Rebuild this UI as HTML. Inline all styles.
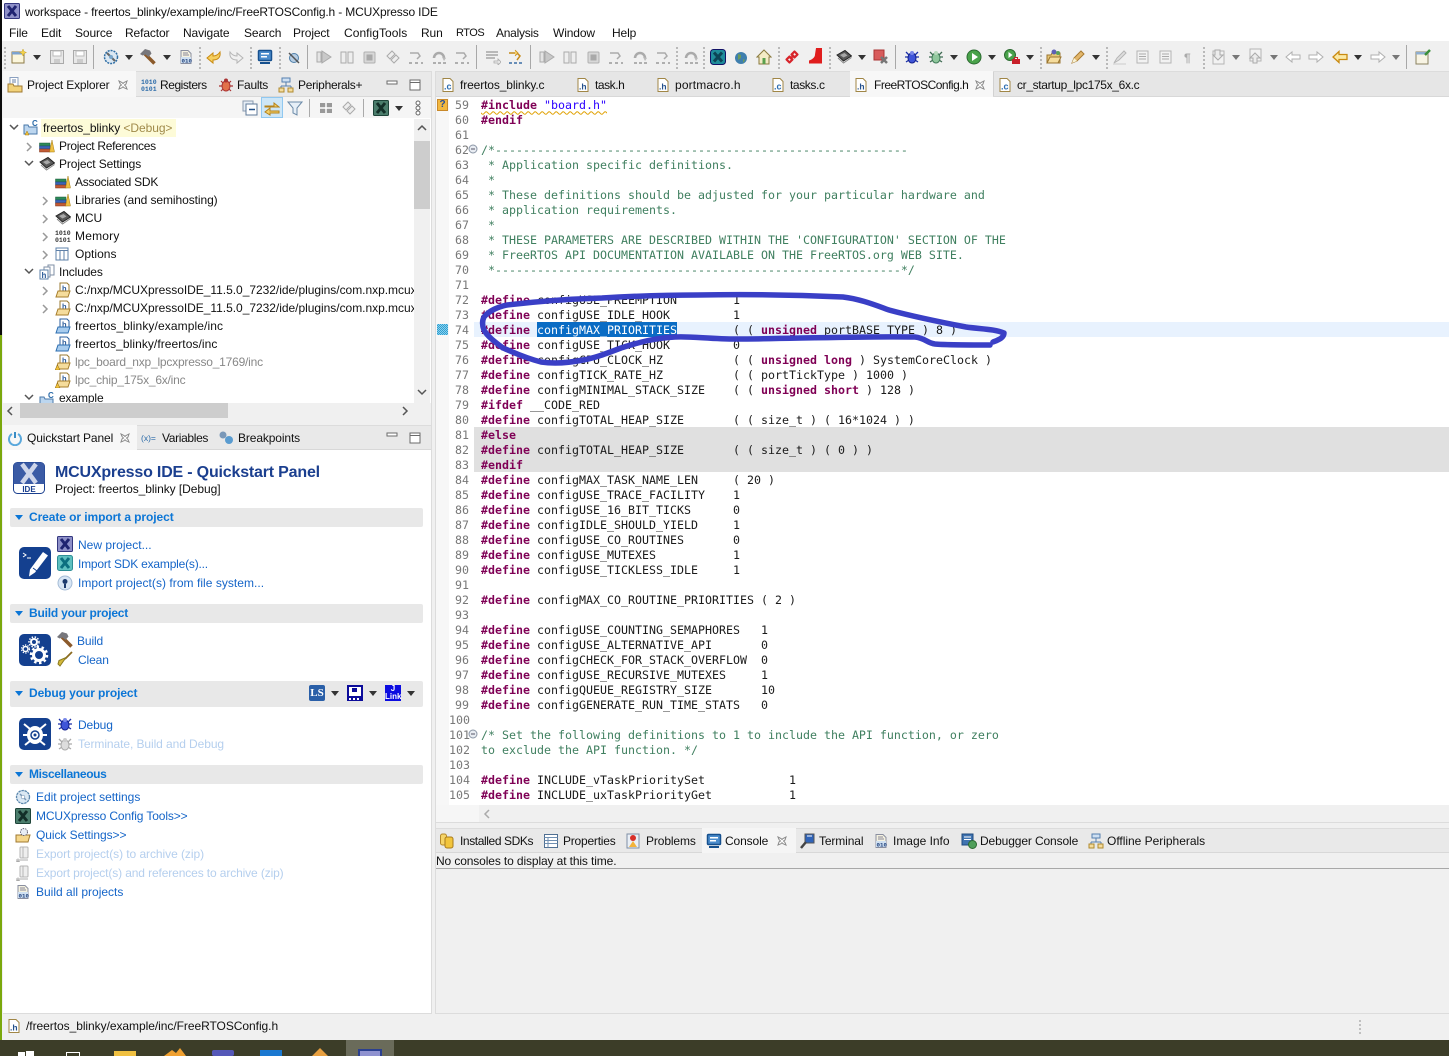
<!DOCTYPE html>
<html lang="en"><head><meta charset="utf-8"><title>workspace - freertos_blinky/example/inc/FreeRTOSConfig.h - MCUXpresso IDE</title>
<style>
html,body{margin:0;padding:0;background:#f0f0f0}
#r{position:relative;width:1449px;height:1056px;overflow:hidden;background:#f0f0f0;font:12px/16px "Liberation Sans",sans-serif;color:#111}
#r div,#r span.t,#r svg.i,#r svg.b{position:absolute}
.t{position:absolute;white-space:nowrap;letter-spacing:-.12px}
.i{width:16px;height:16px}
.a{width:0;height:0;border-left:4.5px solid transparent;border-right:4.5px solid transparent;border-top:5px solid #333}
.ag{border-top-color:#777}
.s{width:1px;height:24px;top:45px;background:#a8a8a8}
.d{width:2px;height:22px;top:47px;background:repeating-linear-gradient(#b9b9b9 0 2px,transparent 2px 4px)}
.l{color:#1565c8}.g{color:#b5cfee}.h{color:#888}
.sec{left:10px;width:413px;background:#e8e8e8;border-radius:2px}
.st{color:#0c76d6;font-weight:bold;letter-spacing:-.2px}
.tri{width:0;height:0;left:15px;border-left:4.5px solid transparent;border-right:4.5px solid transparent;border-top:5px solid #0c76d6}
pre{position:absolute;margin:0;font:11.63px/15px "DejaVu Sans Mono","Liberation Mono",monospace;white-space:pre}
pre b{color:#7f0055}
.c{color:#3f7f5f}
</style></head><body><div id="r">
<svg width="0" height="0" style="position:absolute"><defs>
<symbol id="h" viewBox="0 0 16 16"><path d="M3 1.500h7l3 3v10H3z" fill="#fff" stroke="#a08646"/><text x="4" y="12.500" font-family="Liberation Sans" font-size="8.500" font-weight="bold" fill="#24508c">.h</text></symbol>
<symbol id="cf" viewBox="0 0 16 16"><path d="M3 1.500h7l3 3v10H3z" fill="#fff" stroke="#a08646"/><text x="4" y="12.500" font-family="Liberation Sans" font-size="9" font-weight="bold" fill="#2a6cb0">.c</text></symbol>
<symbol id="nf" viewBox="0 0 16 16"><rect x="1" y="3" width="12" height="11" fill="#fbf6dc" stroke="#8d7a46"/><rect x="1" y="3" width="12" height="2.500" fill="#7da3cf"/><path d="M12 0l1 2.500 2.500 1-2.500 1-1 2.500-1-2.500-2.500-1 2.500-1z" fill="#f3d34a" stroke="#c9a227" stroke-width=".5"/></symbol>
<symbol id="sv" viewBox="0 0 16 16"><rect x="1.500" y="1.500" width="13" height="13" fill="#e8e8e8" stroke="#aaa"/><rect x="4" y="2" width="8" height="5" fill="#fff" stroke="#bbb"/><rect x="5" y="10" width="6" height="4" fill="#ccc"/></symbol>
<symbol id="gc" viewBox="0 0 16 16"><circle cx="8" cy="8" r="6.500" fill="#dbe8f3" stroke="#2f6ea5" stroke-width="1.500" stroke-dasharray="2 1"/><path d="M4 4l8 8" stroke="#666" stroke-width="2"/><circle cx="8" cy="8" r="2" fill="#7aa7cc"/></symbol>
<symbol id="ham" viewBox="0 0 16 16"><path d="M5 5l9.500 9.500" stroke="#8b5a2b" stroke-width="3.500"/><path d="M0 5l5-5 5 1.500 1.500 3-3 3.500-3-2.500-3 1z" fill="#77777c"/></symbol>
<symbol id="bin" viewBox="0 0 16 16"><path d="M3 1.500h7l3 3v10H3z" fill="#f4f1df" stroke="#8a8fa0"/><path d="M5 4h5M5 6h6" stroke="#889"/><rect x="3" y="8" width="10" height="6" fill="#cfe0f2"/><text x="3.500" y="13.500" font-family="Liberation Mono" font-size="5.800" font-weight="bold" fill="#1c3d78">010</text></symbol>
<symbol id="und" viewBox="0 0 16 16"><path d="M14 3c1 6-3 8-7 8v3L1 9l6-5v3c3 0 5-1 7-4z" fill="#f6cf5f" stroke="#c98a10"/></symbol>
<symbol id="red" viewBox="0 0 16 16"><path d="M2 3c-1 6 3 8 7 8v3l6-5-6-5v3c-3 0-5-1-7-4z" fill="#f0f0f0" stroke="#b5b5b5"/></symbol>
<symbol id="mon" viewBox="0 0 16 16"><rect x="1.500" y="1.500" width="13" height="10" rx="1" fill="#4b8ccc" stroke="#16508e" stroke-width="1.500"/><rect x="4" y="4" width="8" height="1.500" fill="#fff"/><rect x="4" y="7" width="6" height="1.500" fill="#fff"/><path d="M3 14h10" stroke="#16508e" stroke-width="2"/></symbol>
<symbol id="pin" viewBox="0 0 16 16"><circle cx="8" cy="8" r="4.500" fill="#b6cde3" stroke="#4d7ea8"/><path d="M3 3l10 10" stroke="#555" stroke-width="1.500"/></symbol>
<symbol id="res" viewBox="0 0 16 16"><rect x="1" y="3" width="4" height="10" fill="#e4e4e4" stroke="#aaa"/><path d="M6 2l9 6-9 6z" fill="#c8c8c8" stroke="#aaa"/></symbol>
<symbol id="pau" viewBox="0 0 16 16"><rect x="2" y="3" width="5" height="11" fill="#eee" stroke="#aaa"/><rect x="9" y="3" width="5" height="11" fill="#eee" stroke="#aaa"/></symbol>
<symbol id="sto" viewBox="0 0 16 16"><rect x="2" y="3" width="11" height="11" rx="1" fill="#d8d8d8" stroke="#b0b0b0"/><rect x="4.500" y="5.500" width="6" height="6" fill="#a9a9a9"/></symbol>
<symbol id="stp" viewBox="0 0 16 16"><path d="M2 4h8l2 3-3 3" fill="none" stroke="#aaa" stroke-width="1.500"/><path d="M1 14h3M7 14h3M13 14h2" stroke="#999" stroke-width="1.500"/></symbol>
<symbol id="sto2" viewBox="0 0 16 16"><path d="M3 9a5 5 0 0 1 10 0" fill="none" stroke="#aaa" stroke-width="2.500"/><path d="M11 8l4 1-2 3z" fill="#bbb"/><path d="M2 14h3M7 14h3M12 14h3" stroke="#999" stroke-width="1.500"/></symbol>
<symbol id="lin" viewBox="0 0 16 16"><path d="M1 3h12M1 6h12M1 9h9" stroke="#a5a5a5" stroke-width="1.500"/><path d="M9 12h4v-2l3 3-3 3v-2H9z" fill="#eee" stroke="#aaa" stroke-width=".8"/></symbol>
<symbol id="ost" viewBox="0 0 16 16"><path d="M1 4h8l3 3-3 4" fill="none" stroke="#c68a1a" stroke-width="1.500"/><path d="M7 1l3 3-3 3" fill="#f3d06a" stroke="#c68a1a" stroke-width=".8"/><path d="M1 14h3M6 14h3M11 14h3" stroke="#3a6ea5" stroke-width="1.500"/></symbol>
<symbol id="tx" viewBox="0 0 16 16"><rect x="0.500" y="0.500" width="15" height="15" rx="3" fill="#1f8c9a" stroke="#116"/><path d="M4 3.500l8 9M12 3.500l-8 9" stroke="#0c4456" stroke-width="3"/></symbol>
<symbol id="xg" viewBox="0 0 16 16"><rect x="0.500" y="0.500" width="15" height="15" rx="1" fill="#4b7d6c" stroke="#1e4439"/><path d="M4 3l8 10M12 3L4 13" stroke="#132f28" stroke-width="3"/></symbol>
<symbol id="xb" viewBox="0 0 16 16"><rect x="0.500" y="0.500" width="15" height="15" rx="1" fill="#8e90c8" stroke="#34377f"/><path d="M4 3l8 10M12 3L4 13" stroke="#1f2370" stroke-width="3"/></symbol>
<symbol id="xt" viewBox="0 0 16 16"><rect x="0.500" y="0.500" width="15" height="15" rx="2" fill="#5ec0c0" stroke="#2e8f96"/><path d="M4 3l8 10M12 3L4 13" stroke="#0b6f80" stroke-width="3"/></symbol>
<symbol id="glb" viewBox="0 0 16 16"><circle cx="8" cy="8" r="6" fill="#3f7fae"/><path d="M5 4l3 1v3l-3 2zM10 9l2 1-2 3z" fill="#6d9b5a"/></symbol>
<symbol id="hom" viewBox="0 0 16 16"><path d="M8 1L1 8h2v7h10V8h2z" fill="#f4ebc6" stroke="#8a7a3e"/><rect x="6.500" y="9" width="3" height="6" fill="#5aa04e"/></symbol>
<symbol id="lnk" viewBox="0 0 16 16"><path d="M2.500 10.500l3-3 3 3-3 3zM7.500 5.500l3-3 3 3-3 3z" fill="none" stroke="#d8242a" stroke-width="2.200" stroke-linejoin="round"/><path d="M6 10l4-4" stroke="#d8242a" stroke-width="2"/></symbol>
<symbol id="boot" viewBox="0 0 16 16"><path d="M8 0h6v15.500H1v-3c3-1 6-3 6-6z" fill="#e01d1d"/></symbol>
<symbol id="chip" viewBox="0 0 16 16"><path d="M1 6l8-4.500 6.500 5.500-8 5z" fill="#5a5a5a" stroke="#222"/><path d="M2 9l5.500 5 8-5.500" stroke="#888" fill="none"/><path d="M4 6l4.500-2 3 2.500-4 2z" fill="#a8a8a8"/></symbol>
<symbol id="rx" viewBox="0 0 16 16"><rect x="1" y="1" width="10" height="10" fill="#d85b5b" stroke="#a33"/><path d="M8 8l6 6M14 8l-6 6" stroke="#777" stroke-width="2.500"/></symbol>
<symbol id="bug" viewBox="0 0 16 16"><path d="M2 3l3 3M14 3l-3 3M1 8h3M15 8h-3M2 13l3-2M14 13l-3-2" stroke="#1a2fa8" stroke-width="1.300"/><ellipse cx="8" cy="9" rx="4" ry="5" fill="#3f55d8" stroke="#121f8a"/><circle cx="8" cy="4" r="2" fill="#7887e8"/></symbol>
<symbol id="bgg" viewBox="0 0 16 16"><path d="M2 3l3 3M14 3l-3 3M1 8h3M15 8h-3M2 13l3-2M14 13l-3-2" stroke="#3f6b53" stroke-width="1.300"/><ellipse cx="8" cy="9" rx="4" ry="5" fill="#8fc79c" stroke="#3f7a57"/><circle cx="8" cy="4" r="2" fill="#b7d8bb"/></symbol>
<symbol id="bgr" viewBox="0 0 16 16"><path d="M2 3l3 3M14 3l-3 3M1 8h3M15 8h-3M2 13l3-2M14 13l-3-2" stroke="#aaa" stroke-width="1.300"/><ellipse cx="8" cy="9" rx="4" ry="5" fill="#ddd" stroke="#aaa"/><circle cx="8" cy="4" r="2" fill="#ccc"/></symbol>
<symbol id="run" viewBox="0 0 16 16"><circle cx="8" cy="8" r="7" fill="#49a24a" stroke="#2b6a30"/><path d="M6 4l6 4-6 4z" fill="#fff"/></symbol>
<symbol id="rt" viewBox="0 0 16 16"><circle cx="6" cy="6" r="5.500" fill="#49a24a" stroke="#2b6a30"/><path d="M4.500 3l4 3-4 3z" fill="#fff"/><rect x="8" y="10" width="8" height="5" fill="#c8202a"/><rect x="10.500" y="8.500" width="3" height="2" fill="none" stroke="#c8202a"/></symbol>
<symbol id="fld" viewBox="0 0 16 16"><path d="M1 14V6h4l1-2h8v10z" fill="#e8c878" stroke="#9a7530"/><path d="M1 14l3-6h11l-3 6z" fill="#f5dc9c" stroke="#9a7530"/><circle cx="8" cy="3" r="2.500" fill="#5d5fb5"/><circle cx="12" cy="4" r="2" fill="#5aa05a"/></symbol>
<symbol id="pen" viewBox="0 0 16 16"><path d="M2 14l2-5 7-7 3 3-7 7z" fill="#e3b76c" stroke="#a87a30"/><path d="M2 14l2-5 3 3z" fill="#f8f3d6"/></symbol>
<symbol id="gp" viewBox="0 0 16 16"><path d="M2 14l3-5 7-7 2 2-7 7z" fill="#dedede" stroke="#b5b5b5"/><path d="M1 15h13" stroke="#ccc"/></symbol>
<symbol id="gd" viewBox="0 0 16 16"><rect x="2" y="2" width="11" height="12" fill="#f2f2f2" stroke="#b5b5b5"/><path d="M4 5h7M4 7.500h7M4 10h7" stroke="#aaa"/></symbol>
<symbol id="dn" viewBox="0 0 16 16"><rect x="3" y="2" width="11" height="13" fill="#f2f2f2" stroke="#b5b5b5"/><path d="M5 1h5v5h3l-5 5-5-5h2z" fill="#ececec" stroke="#aaa"/></symbol>
<symbol id="up" viewBox="0 0 16 16"><rect x="3" y="1" width="11" height="12" fill="#f2f2f2" stroke="#b5b5b5"/><path d="M6 15v-5H3l5-5 5 5h-3v5z" fill="#ececec" stroke="#aaa"/></symbol>
<symbol id="la" viewBox="0 0 16 16"><path d="M7 3v3h8v4H7v3L1 8z" fill="#fff" stroke="#b0b0b0"/></symbol>
<symbol id="ra" viewBox="0 0 16 16"><path d="M9 3v3H1v4h8v3l6-5z" fill="#fff" stroke="#b0b0b0"/></symbol>
<symbol id="lo" viewBox="0 0 16 16"><path d="M7 2.500v3h8v5H7v3L1 8z" fill="#fbe9a5" stroke="#c98a10" stroke-width="1.300"/></symbol>
<symbol id="win" viewBox="0 0 16 16"><rect x="1" y="3" width="12" height="12" fill="#f8f4e4" stroke="#8a8260"/><rect x="1" y="3" width="12" height="2.500" fill="#8faed0"/><path d="M10 6l5-5" stroke="#3a8f3a" stroke-width="2.500"/></symbol>
<symbol id="cl" viewBox="0 0 12 12"><path d="M2 2l3 1.500L6 4.500 7 3.500 10 2l-1 3-1.500 1L9 7.500 10 10 7 8.700 6 7.700 5 8.700 2 10l1-3 1.500-1L3 4.500z" fill="#fff" stroke="#8b8b8b"/></symbol>
<symbol id="pe" viewBox="0 0 16 16"><rect x="3" y="0.500" width="8" height="10" fill="#fff" stroke="#8aa0c0"/><path d="M5 3h4M5 5h4" stroke="#6a80a8"/><path d="M1 15V7h5l1 2h8v6z" fill="#f2d27a" stroke="#a07a30"/></symbol>
<symbol id="bits" viewBox="0 0 16 16"><text x="0" y="7" font-family="Liberation Mono" font-size="6.500" font-weight="bold" fill="#2a6aa8">1010</text><text x="0" y="14" font-family="Liberation Mono" font-size="6.500" font-weight="bold" fill="#2a6aa8">0101</text></symbol>
<symbol id="bits2" viewBox="0 0 16 16"><text x="0" y="7" font-family="Liberation Mono" font-size="6.500" font-weight="bold" fill="#333">1010</text><text x="0" y="14" font-family="Liberation Mono" font-size="6.500" font-weight="bold" fill="#333">0101</text></symbol>
<symbol id="flt" viewBox="0 0 16 16"><path d="M3 4l3 3M13 4l-3 3M1 9h3M15 9h-3M3 14l3-3M13 14l-3-3" stroke="#a33" stroke-width="1.200"/><ellipse cx="8" cy="9" rx="4" ry="5" fill="#e2714b" stroke="#a33"/><circle cx="8" cy="3.500" r="2" fill="#a33"/></symbol>
<symbol id="per" viewBox="0 0 16 16"><rect x="4" y="1" width="8" height="4" fill="#cfe0f2" stroke="#5580b0"/><path d="M8 5v4M3 9h10M3 9v2M13 9v2" stroke="#5580b0" fill="none"/><rect x="1" y="11" width="5" height="4" fill="#f5dc9c" stroke="#b08a30"/><rect x="10" y="11" width="5" height="4" fill="#f5dc9c" stroke="#b08a30"/></symbol>
<symbol id="min" viewBox="0 0 16 16"><rect x="3" y="4" width="10" height="3" fill="#fff" stroke="#6b6b6b"/></symbol>
<symbol id="max" viewBox="0 0 16 16"><rect x="3" y="3" width="10" height="10" fill="#fff" stroke="#6b6b6b"/><path d="M3 5.500h10" stroke="#6b6b6b"/></symbol>
<symbol id="col" viewBox="0 0 16 16"><rect x="1" y="1" width="10" height="10" fill="#e6edf5" stroke="#8a9ab0"/><rect x="4" y="4" width="11" height="11" fill="#fff" stroke="#5f7a9a"/><path d="M7 9.500h6" stroke="#22508a" stroke-width="1.500"/></symbol>
<symbol id="lk" viewBox="0 0 16 16"><path d="M1 6h9V3l5 4-5 0H1z" fill="#f3d06a" stroke="#b5821a"/><path d="M15 11H6V8L1 12l5 3v-2h9z" fill="#f3d06a" stroke="#b5821a"/></symbol>
<symbol id="fil" viewBox="0 0 16 16"><path d="M1 2h14l-5 6v7l-4-2V8z" fill="#e6eff7" stroke="#6b8aa8"/></symbol>
<symbol id="grp" viewBox="0 0 16 16"><rect x="2" y="3" width="12" height="10" fill="#999"/><path d="M8 3v10M2 8h12" stroke="#fff" stroke-width="1.500"/></symbol>
<symbol id="syn" viewBox="0 0 16 16"><path d="M2 7l5-5 3 3-5 5zM14 9l-5 5-3-3 5-5z" fill="#eee" stroke="#aaa"/></symbol>
<symbol id="prj" viewBox="0 0 16 16"><path d="M1 14V5h4l1 2h8v7z" fill="#bcd6ef" stroke="#4a78aa"/><text x="9" y="6" font-family="Liberation Sans" font-size="8" font-weight="bold" fill="#2a6aa8">C</text><path d="M2 15l2-4 2 4z" fill="#f3c33b" stroke="#a57b10" stroke-width=".5"/></symbol>
<symbol id="lib" viewBox="0 0 16 16"><rect x="0.500" y="5" width="10.500" height="3" fill="#2c8a58" stroke="#1c5a3a" stroke-width=".5"/><rect x="0.500" y="8" width="10.500" height="3" fill="#3a66b8" stroke="#1f3f80" stroke-width=".5"/><rect x="0.500" y="11" width="10.500" height="3" fill="#c25c36" stroke="#7c3018" stroke-width=".5"/><path d="M10.500 14l2.500-12 2.500 12z" fill="#efc044" stroke="#a57b10" stroke-width=".5"/></symbol>
<symbol id="opt" viewBox="0 0 16 16"><rect x="2" y="2" width="12" height="12" fill="#fff" stroke="#5e80a8"/><path d="M2 4.500h12M6 4.500V14M10 4.500V14" stroke="#5e80a8"/></symbol>
<symbol id="inc" viewBox="0 0 16 16"><rect x="9" y="1" width="6" height="10" fill="#fff" stroke="#7f8fa5"/><rect x="5" y="3" width="6" height="10" fill="#fff" stroke="#7f8fa5"/><rect x="1" y="6" width="8" height="9" fill="#fff" stroke="#5e80a8"/><text x="2.500" y="14" font-family="Liberation Sans" font-size="8" font-weight="bold" fill="#2a5a98">h</text></symbol>
<symbol id="fh" viewBox="0 0 16 16"><path d="M5 1h7l2 2v8H5z" fill="#fff" stroke="#9a7a30"/><text x="7" y="9" font-family="Liberation Sans" font-size="7.500" font-weight="bold" fill="#2a5a98">h</text><path d="M1 15l2-6h12l-2 6z" fill="#f5dc9c" stroke="#a77e2c"/></symbol>
<symbol id="fb" viewBox="0 0 16 16"><path d="M5 1h7l2 2v8H5z" fill="#fff" stroke="#2d5f9e"/><text x="7" y="9" font-family="Liberation Sans" font-size="7.500" font-weight="bold" fill="#2a5a98">h</text><path d="M1 15l2-6h12l-2 6z" fill="#a8ccee" stroke="#2d6eb0"/></symbol>
<symbol id="fw" viewBox="0 0 16 16"><path d="M5 1h7l2 2v8H5z" fill="#fff" stroke="#9a7a30"/><text x="7" y="9" font-family="Liberation Sans" font-size="7.500" font-weight="bold" fill="#2a5a98">h</text><path d="M1 15l2-6h12l-2 6z" fill="#f5dc9c" stroke="#a77e2c"/><path d="M0 16l2.500-5 2.500 5z" fill="#f3c33b" stroke="#8a6510" stroke-width=".5"/></symbol>
<symbol id="pw" viewBox="0 0 16 16"><path d="M8 2v6" stroke="#3a8cc4" stroke-width="2"/><path d="M5 4a6 6 0 1 0 6 0" fill="none" stroke="#5aa8dc" stroke-width="2"/></symbol>
<symbol id="vr" viewBox="0 0 16 16"><text x="0" y="11" font-family="Liberation Sans" font-size="8.500" fill="#2a6aa8">(x)=</text></symbol>
<symbol id="bp" viewBox="0 0 16 16"><circle cx="5" cy="5" r="3.500" fill="#7a98b8"/><circle cx="11" cy="10" r="4" fill="#5a9cd0"/></symbol>
<symbol id="sdk" viewBox="0 0 16 16"><rect x="0.500" y="1" width="6" height="11" rx="2" fill="#f5d468" stroke="#b5892a"/><rect x="5" y="4" width="8" height="11" rx="2" fill="#f2c53c" stroke="#a87a1c"/></symbol>
<symbol id="prp" viewBox="0 0 16 16"><rect x="1.500" y="1.500" width="13" height="13" fill="#fff" stroke="#4f6f92"/><path d="M1.500 4.500h13M5 4.500v10M1.500 7.500h13M1.500 10.500h13" stroke="#6f8fb2"/></symbol>
<symbol id="prb" viewBox="0 0 16 16"><rect x="2" y="1" width="12" height="14" fill="#e9eff6" stroke="#7f8fa5"/><circle cx="8" cy="5" r="3" fill="#d8302a"/><path d="M8 8l4 6H4z" fill="#f3b33b"/></symbol>
<symbol id="trm" viewBox="0 0 16 16"><rect x="6" y="1" width="9" height="9" fill="#2f63b8" stroke="#555"/><path d="M8 3h5" stroke="#fff"/><path d="M2 15l5-6" stroke="#444" stroke-width="2.500"/></symbol>
<symbol id="dbg" viewBox="0 0 16 16"><rect x="1" y="1" width="11" height="11" fill="#3f73b0" stroke="#1e4a80"/><path d="M3 4h7M3 6.500h7" stroke="#fff"/><circle cx="11.500" cy="11.500" r="4" fill="#4f9f5a" stroke="#2b6a30"/></symbol>
<symbol id="exp" viewBox="0 0 16 16"><rect x="5" y="1" width="8" height="11" rx="1" fill="#eee" stroke="#b5b5b5"/><path d="M8 1v11" stroke="#b5b5b5"/><path d="M1 16l2-4 2 4z" fill="#aaa"/><path d="M1 14h12" stroke="#c8c8c8" stroke-width="1.500"/></symbol>
<symbol id="wr" viewBox="0 0 16 16"><circle cx="8" cy="8" r="6.500" fill="#dbe8f3" stroke="#5a86ac" stroke-width="1.300" stroke-dasharray="2.500 .7"/><path d="M5 5l6 6" stroke="#7a98b5" stroke-width="1.500"/><circle cx="8" cy="8" r="1.800" fill="#fff" stroke="#7a98b5" stroke-width=".7"/></symbol>
<symbol id="qs" viewBox="0 0 16 16"><path d="M1 15V8h14l-2 7z" fill="#f5d78c" stroke="#a07a30"/><circle cx="9" cy="5" r="3.500" fill="#e8eef5" stroke="#667" stroke-dasharray="1.500 1"/></symbol>
<symbol id="imp" viewBox="0 0 16 16"><circle cx="8" cy="8" r="7" fill="#d8e6f5" stroke="#a5bcd6"/><circle cx="8" cy="6.500" r="2.500" fill="#1b3a6e"/><path d="M7 9h2v4H7z" fill="#1b3a6e"/></symbol>
<symbol id="cln" viewBox="0 0 16 16"><path d="M15 1L8 8" stroke="#8a6a20" stroke-width="1.800"/><path d="M9 6.500l-6 8.500-2-2 1-3.500z" fill="#d4b83a" stroke="#8a7a20"/></symbol>
<symbol id="dots" viewBox="0 0 16 16"><circle cx="8" cy="3" r="2" fill="#fff" stroke="#666"/><circle cx="8" cy="8" r="2" fill="#fff" stroke="#666"/><circle cx="8" cy="13" r="2" fill="#fff" stroke="#666"/></symbol>
</defs></svg>

<!-- window edges -->
<div style="left:0;top:0;width:1449px;height:41px;background:#fff"></div>
<div style="left:0;top:0;width:2px;height:335px;background:#0b0b0b"></div>
<div style="left:0;top:335px;width:2px;height:705px;background:#7aa80c"></div>

<!-- title -->
<svg class="i" style="left:4px;top:3px"><use href="#xb"/></svg>
<span class="t" style="left:25px;top:4px;letter-spacing:-.16px">workspace - freertos_blinky/example/inc/FreeRTOSConfig.h - MCUXpresso IDE</span>

<!-- menu -->
<span class="t" style="left:9px;top:25px">File</span><span class="t" style="left:41px;top:25px">Edit</span><span class="t" style="left:75px;top:25px">Source</span><span class="t" style="left:125px;top:25px">Refactor</span><span class="t" style="left:183px;top:25px">Navigate</span><span class="t" style="left:244px;top:25px">Search</span><span class="t" style="left:293px;top:25px">Project</span><span class="t" style="left:344px;top:25px;letter-spacing:.05px">ConfigTools</span><span class="t" style="left:421px;top:25px">Run</span><span class="t" style="left:456px;top:25px;font-size:11px;letter-spacing:-.5px">RTOS</span><span class="t" style="left:496px;top:25px;letter-spacing:-.25px">Analysis</span><span class="t" style="left:553px;top:25px">Window</span><span class="t" style="left:612px;top:25px">Help</span>

<!-- toolbar -->
<div class="d" style="left:4px"></div>
<svg class="i" style="left:11px;top:49px"><use href="#nf"/></svg><div class="a" style="left:33px;top:55px"></div>
<svg class="i" style="left:49px;top:49px"><use href="#sv"/></svg><svg class="i" style="left:72px;top:49px"><use href="#sv"/></svg>
<div class="s" style="left:93px"></div>
<svg class="i" style="left:103px;top:49px"><use href="#gc"/></svg><div class="a" style="left:125px;top:55px"></div>
<svg class="i" style="left:140px;top:49px"><use href="#ham"/></svg><div class="a" style="left:163px;top:55px"></div>
<svg class="i" style="left:178px;top:49px"><use href="#bin"/></svg>
<div class="d" style="left:199px"></div>
<svg class="i" style="left:206px;top:49px"><use href="#und"/></svg><svg class="i" style="left:228px;top:49px"><use href="#red"/></svg>
<div class="d" style="left:250px"></div>
<svg class="i" style="left:257px;top:49px"><use href="#mon"/></svg>
<div class="d" style="left:279px"></div>
<svg class="i" style="left:286px;top:50px"><use href="#pin"/></svg>
<div class="s" style="left:307px"></div>
<svg class="i" style="left:316px;top:49px"><use href="#res"/></svg><svg class="i" style="left:339px;top:49px"><use href="#pau"/></svg><svg class="i" style="left:362px;top:49px"><use href="#sto"/></svg><svg class="i" style="left:385px;top:49px"><use href="#syn"/></svg><svg class="i" style="left:408px;top:49px"><use href="#stp"/></svg><svg class="i" style="left:431px;top:49px"><use href="#sto2"/></svg><svg class="i" style="left:454px;top:49px"><use href="#stp"/></svg>
<div class="s" style="left:476px"></div>
<svg class="i" style="left:485px;top:49px"><use href="#lin"/></svg><svg class="i" style="left:508px;top:49px"><use href="#ost"/></svg>
<div class="s" style="left:530px"></div>
<svg class="i" style="left:539px;top:49px"><use href="#res"/></svg><svg class="i" style="left:562px;top:49px"><use href="#pau"/></svg><svg class="i" style="left:586px;top:49px"><use href="#sto"/></svg><svg class="i" style="left:608px;top:49px"><use href="#stp"/></svg><svg class="i" style="left:632px;top:49px"><use href="#sto2"/></svg><svg class="i" style="left:655px;top:49px"><use href="#stp"/></svg>
<div class="d" style="left:676px"></div>
<svg class="i" style="left:683px;top:49px"><use href="#sto2"/></svg>
<div class="d" style="left:703px"></div>
<svg class="i" style="left:710px;top:49px"><use href="#tx"/></svg><svg class="i" style="left:733px;top:50px"><use href="#glb"/></svg><svg class="i" style="left:756px;top:49px"><use href="#hom"/></svg>
<div class="d" style="left:778px"></div>
<svg class="i" style="left:784px;top:49px"><use href="#lnk"/></svg><svg class="i" style="left:808px;top:48px"><use href="#boot"/></svg>
<div class="d" style="left:829px"></div>
<svg class="i" style="left:836px;top:49px"><use href="#chip"/></svg><div class="a" style="left:858px;top:55px"></div>
<svg class="i" style="left:873px;top:49px"><use href="#rx"/></svg>
<div class="s" style="left:895px"></div>
<svg class="i" style="left:904px;top:49px"><use href="#bug"/></svg><svg class="i" style="left:928px;top:49px"><use href="#bgg"/></svg><div class="a" style="left:950px;top:55px"></div>
<svg class="i" style="left:966px;top:49px"><use href="#run"/></svg><div class="a" style="left:988px;top:55px"></div>
<svg class="i" style="left:1004px;top:49px"><use href="#rt"/></svg><div class="a" style="left:1026px;top:55px"></div>
<div class="d" style="left:1040px"></div>
<svg class="i" style="left:1046px;top:49px"><use href="#fld"/></svg><svg class="i" style="left:1070px;top:49px"><use href="#pen"/></svg><div class="a" style="left:1092px;top:55px"></div>
<div class="d" style="left:1106px"></div>
<svg class="i" style="left:1112px;top:49px"><use href="#gp"/></svg><svg class="i" style="left:1135px;top:49px"><use href="#gd"/></svg><svg class="i" style="left:1158px;top:49px"><use href="#gd"/></svg>
<span class="t" style="left:1184px;top:50px;color:#aaa;font-weight:bold">¶</span>
<div class="d" style="left:1203px"></div>
<svg class="i" style="left:1210px;top:49px"><use href="#dn"/></svg><div class="a ag" style="left:1232px;top:55px"></div>
<svg class="i" style="left:1247px;top:48px"><use href="#up"/></svg><div class="a ag" style="left:1270px;top:55px"></div>
<svg class="i" style="left:1285px;top:49px"><use href="#la"/></svg><svg class="i" style="left:1308px;top:49px"><use href="#ra"/></svg>
<svg class="i" style="left:1332px;top:49px"><use href="#lo"/></svg><div class="a" style="left:1354px;top:55px"></div>
<svg class="i" style="left:1370px;top:49px"><use href="#ra"/></svg><div class="a ag" style="left:1392px;top:55px"></div>
<div class="s" style="left:1406px"></div>
<svg class="i" style="left:1415px;top:49px"><use href="#win"/></svg>

<!-- left top panel -->
<div style="left:3px;top:71px;width:428px;height:26px;background:#e9e9e9;border-top:1px solid #dcdcdc;border-bottom:1px solid #d8d8d8;box-sizing:border-box"></div>
<div style="left:3px;top:71px;width:133px;height:26px;background:#f7f7f7"></div>
<div style="left:3px;top:97px;width:428px;height:321px;background:#fff"></div>
<div style="left:3px;top:97px;width:428px;height:21px;background:#f5f5f5"></div>
<svg class="i" style="left:7px;top:77px"><use href="#pe"/></svg><span class="t" style="left:27px;top:77px;letter-spacing:-.18px">Project Explorer</span><svg class="i" style="left:117px;top:79px;width:12px;height:12px"><use href="#cl"/></svg>
<svg class="i" style="left:141px;top:77px"><use href="#bits"/></svg><span class="t" style="left:160px;top:77px;letter-spacing:-.45px">Registers</span>
<svg class="i" style="left:218px;top:77px"><use href="#flt"/></svg><span class="t" style="left:237px;top:77px;letter-spacing:-.28px">Faults</span>
<svg class="i" style="left:278px;top:77px"><use href="#per"/></svg><span class="t" style="left:298px;top:77px;letter-spacing:-.29px">Peripherals+</span>
<svg class="i" style="left:384px;top:77px"><use href="#min"/></svg><svg class="i" style="left:407px;top:77px"><use href="#max"/></svg>

<svg class="i" style="left:242px;top:100px"><use href="#col"/></svg>
<div style="left:261px;top:97px;width:22px;height:21px;background:#cde6f7;border:1px solid #90c8f0;box-sizing:border-box"></div><svg class="i" style="left:264px;top:100px"><use href="#lk"/></svg>
<svg class="i" style="left:287px;top:100px"><use href="#fil"/></svg><div style="left:309px;top:99px;width:1px;height:18px;background:#aaa"></div>
<svg class="i" style="left:318px;top:100px"><use href="#grp"/></svg><svg class="i" style="left:341px;top:100px"><use href="#syn"/></svg><div style="left:363px;top:99px;width:1px;height:18px;background:#aaa"></div>
<svg class="i" style="left:373px;top:100px"><use href="#xg"/></svg><div class="a" style="left:395px;top:106px"></div><svg class="i" style="left:410px;top:100px"><use href="#dots"/></svg>

<!-- tree -->
<div style="left:41px;top:119px;width:135px;height:18px;background:#fdfbd8"></div>
<svg class="b" style="left:6px;top:119px;width:20px;height:20px" viewBox="0 0 20 20" fill="none" stroke="#555" stroke-width="1.500"><path d="M4 6l4 4 4-4"/></svg>
<svg class="b" style="left:20px;top:119px;width:40px;height:288px" viewBox="0 0 40 288" fill="none" stroke-width="1.500"><path d="M7 24l4 4-4 4" stroke="#999"/><path d="M5 42l4 4 4-4" stroke="#555"/><path d="M23 78l4 4-4 4" stroke="#999"/><path d="M23 96l4 4-4 4" stroke="#999"/><path d="M23 114l4 4-4 4" stroke="#999"/><path d="M23 132l4 4-4 4" stroke="#999"/><path d="M5 150l4 4 4-4" stroke="#555"/><path d="M23 168l4 4-4 4" stroke="#999"/><path d="M23 186l4 4-4 4" stroke="#999"/><path d="M5 276l4 4 4-4" stroke="#555"/></svg>
<svg class="i" style="left:23px;top:120px"><use href="#prj"/></svg><span class="t" style="left:43px;top:120px;letter-spacing:-.06px">freertos_blinky <span style="color:#a08a4a">&lt;Debug&gt;</span></span>
<svg class="i" style="left:39px;top:138px"><use href="#lib"/></svg><span class="t" style="left:59px;top:138px;letter-spacing:-.29px">Project References</span>
<svg class="i" style="left:39px;top:156px"><use href="#chip"/></svg><span class="t" style="left:59px;top:156px">Project Settings</span>
<svg class="i" style="left:55px;top:174px"><use href="#lib"/></svg><span class="t" style="left:75px;top:174px;letter-spacing:-.26px">Associated SDK</span>
<svg class="i" style="left:55px;top:192px"><use href="#lib"/></svg><span class="t" style="left:75px;top:192px;letter-spacing:-.08px">Libraries (and semihosting)</span>
<svg class="i" style="left:55px;top:210px"><use href="#chip"/></svg><span class="t" style="left:75px;top:210px;letter-spacing:-.1px">MCU</span>
<svg class="i" style="left:55px;top:228px"><use href="#bits2"/></svg><span class="t" style="left:75px;top:228px;letter-spacing:.2px">Memory</span>
<svg class="i" style="left:54px;top:246px"><use href="#opt"/></svg><span class="t" style="left:75px;top:246px;letter-spacing:.02px">Options</span>
<svg class="i" style="left:39px;top:264px"><use href="#inc"/></svg><span class="t" style="left:59px;top:264px">Includes</span>
<svg class="i" style="left:55px;top:282px"><use href="#fh"/></svg><span class="t" style="left:75px;top:282px;width:339px;overflow:hidden;letter-spacing:-.03px">C:/nxp/MCUXpressoIDE_11.5.0_7232/ide/plugins/com.nxp.mcuxpresso.tools</span>
<svg class="i" style="left:55px;top:300px"><use href="#fh"/></svg><span class="t" style="left:75px;top:300px;width:339px;overflow:hidden;letter-spacing:-.03px">C:/nxp/MCUXpressoIDE_11.5.0_7232/ide/plugins/com.nxp.mcuxpresso.tools</span>
<svg class="i" style="left:55px;top:318px"><use href="#fb"/></svg><span class="t" style="left:75px;top:318px;letter-spacing:.1px">freertos_blinky/example/inc</span>
<svg class="i" style="left:55px;top:336px"><use href="#fb"/></svg><span class="t" style="left:75px;top:336px;letter-spacing:.06px">freertos_blinky/freertos/inc</span>
<svg class="i" style="left:55px;top:354px"><use href="#fw"/></svg><span class="t h" style="left:75px;top:354px;letter-spacing:-.21px">lpc_board_nxp_lpcxpresso_1769/inc</span>
<svg class="i" style="left:55px;top:372px"><use href="#fw"/></svg><span class="t h" style="left:75px;top:372px;letter-spacing:-.22px">lpc_chip_175x_6x/inc</span>
<svg class="i" style="left:39px;top:392px"><use href="#prj"/></svg><span class="t" style="left:59px;top:390px">example</span>
<!-- tree scrollbars -->
<div style="left:3px;top:403px;width:428px;height:15px;background:#f0f0f0"></div>
<div style="left:20px;top:403px;width:208px;height:15px;background:#cdcdcd"></div>
<svg class="b" style="left:3px;top:403px;width:428px;height:15px" fill="none" stroke="#555" stroke-width="1.500"><path d="M9 4l-4 4 4 4"/><path d="M400 4l4 4-4 4"/></svg>
<div style="left:414px;top:119px;width:16px;height:284px;background:#f0f0f0"></div>
<div style="left:414px;top:141px;width:16px;height:68px;background:#cdcdcd"></div>
<svg class="b" style="left:414px;top:119px;width:16px;height:284px" fill="none" stroke="#555" stroke-width="1.500"><path d="M4 11l4-4 4 4"/><path d="M4 271l4 4 4-4"/></svg>

<!-- quickstart -->
<div style="left:3px;top:425px;width:428px;height:25px;background:#e9e9e9;border-top:1px solid #dcdcdc;border-bottom:1px solid #d8d8d8;box-sizing:border-box"></div>
<div style="left:3px;top:425px;width:134px;height:25px;background:#f7f7f7"></div>
<div style="left:3px;top:450px;width:428px;height:563px;background:#fff"></div>
<svg class="i" style="left:7px;top:430px"><use href="#pw"/></svg><span class="t" style="left:27px;top:430px">Quickstart Panel</span><svg class="i" style="left:119px;top:432px;width:12px;height:12px"><use href="#cl"/></svg>
<svg class="i" style="left:141px;top:430px"><use href="#vr"/></svg><span class="t" style="left:162px;top:430px;letter-spacing:-.34px">Variables</span>
<svg class="i" style="left:218px;top:430px"><use href="#bp"/></svg><span class="t" style="left:238px;top:430px">Breakpoints</span>
<svg class="i" style="left:384px;top:429px"><use href="#min"/></svg><svg class="i" style="left:407px;top:430px"><use href="#max"/></svg>

<svg class="b" style="left:13px;top:462px;width:32px;height:32px" viewBox="0 0 32 32"><rect x=".5" y=".5" width="31" height="31" rx="4" fill="#fff" stroke="#1a3f8f"/><path d="M.5 22V4.500a4 4 0 0 1 4-4h23a4 4 0 0 1 4 4V22z" fill="#3b5ba5"/><path d="M9 2l14 19M23 2L9 21" stroke="#cfd6ea" stroke-width="4.500"/><text x="16" y="30" text-anchor="middle" font-family="Liberation Sans" font-size="8" font-weight="bold" fill="#1a3f8f">IDE</text></svg>
<span class="t" style="left:55px;top:464px;font-size:16px;line-height:18px;font-weight:bold;color:#1b3f8f;letter-spacing:-.19px">MCUXpresso IDE - Quickstart Panel</span>
<span class="t" style="left:55px;top:481px;letter-spacing:-.06px">Project: freertos_blinky [Debug]</span>

<div class="sec" style="top:508px;height:19px"></div><div class="tri" style="top:515px"></div><span class="t st" style="left:29px;top:509px;letter-spacing:-.08px">Create or import a project</span>
<svg class="b" style="left:19px;top:547px;width:32px;height:32px" viewBox="0 0 32 32"><rect width="32" height="32" rx="5" fill="#14408f"/><path d="M4 6l3 2-3 2M8 11h4" stroke="#fff" fill="none"/><path d="M24 5l5 3.500-13 17-6 4 1-7z" fill="#fff"/><path d="M14 21l4 3" stroke="#14408f"/></svg>
<svg class="i" style="left:57px;top:536px"><use href="#xb"/></svg><span class="t l" style="left:78px;top:537px;letter-spacing:.02px">New project...</span>
<svg class="i" style="left:57px;top:555px"><use href="#xt"/></svg><span class="t l" style="left:78px;top:556px;letter-spacing:-.2px">Import SDK example(s)...</span>
<svg class="i" style="left:57px;top:575px"><use href="#imp"/></svg><span class="t l" style="left:78px;top:575px;letter-spacing:.04px">Import project(s) from file system...</span>

<div class="sec" style="top:604px;height:19px"></div><div class="tri" style="top:611px"></div><span class="t st" style="left:29px;top:605px">Build your project</span>
<svg class="b" style="left:19px;top:634px;width:32px;height:32px" viewBox="0 0 32 32"><rect width="32" height="32" rx="5" fill="#14408f"/><circle cx="20" cy="21" r="5.500" fill="none" stroke="#fff" stroke-width="3"/><circle cx="20" cy="21" r="8" fill="none" stroke="#fff" stroke-width="2.500" stroke-dasharray="2.500 2.500"/><circle cx="15" cy="8" r="3" fill="none" stroke="#fff" stroke-width="2"/><circle cx="15" cy="8" r="5" fill="none" stroke="#fff" stroke-width="1.500" stroke-dasharray="1.500 1.500"/><circle cx="6.500" cy="15" r="2.500" fill="none" stroke="#fff" stroke-width="1.500"/><circle cx="6.500" cy="15" r="4" fill="none" stroke="#fff" stroke-width="1.200" stroke-dasharray="1.300 1.300"/></svg>
<svg class="i" style="left:57px;top:632px"><use href="#ham"/></svg><span class="t l" style="left:77px;top:633px">Build</span>
<svg class="i" style="left:57px;top:651px"><use href="#cln"/></svg><span class="t l" style="left:78px;top:652px">Clean</span>

<div class="sec" style="top:681px;height:26px"></div><div class="tri" style="top:691px"></div><span class="t st" style="left:29px;top:685px;letter-spacing:-.09px">Debug your project</span>
<div style="left:309px;top:685px;width:16px;height:16px;background:#2a5fa8;border-radius:2px;color:#fff;font:bold 11px/16px 'Liberation Serif',serif;text-align:center">LS</div><div class="a" style="left:331px;top:691px"></div>
<svg class="b" style="left:347px;top:685px;width:16px;height:16px"><rect width="16" height="16" fill="#0c0c9a"/><rect x="2" y="2" width="12" height="9" fill="#fff"/><rect x="5" y="3" width="5" height="4" fill="#0c0c9a"/><rect x="2" y="13" width="2" height="2" fill="#fff"/><rect x="6" y="13" width="2" height="2" fill="#fff"/><rect x="10" y="13" width="2" height="2" fill="#fff"/></svg><div class="a" style="left:369px;top:691px"></div>
<div style="left:385px;top:685px;width:16px;height:16px;background:#0c0ce0;color:#fff;font:bold 8px/8px 'Liberation Sans',sans-serif;text-align:center">J<br>Link</div><div class="a" style="left:407px;top:691px"></div>

<svg class="b" style="left:19px;top:718px;width:32px;height:32px" viewBox="0 0 32 32"><rect width="32" height="32" rx="5" fill="#14408f"/><ellipse cx="16" cy="17" rx="8" ry="9" fill="#fff"/><circle cx="16" cy="17" r="4" fill="none" stroke="#14408f" stroke-width="1.500"/><circle cx="16" cy="17" r="1.500" fill="#14408f"/><path d="M5 6l6 5M27 6l-6 5M4 17h5M28 17h-5M6 27l5-4M26 27l-5-4" stroke="#fff" stroke-width="2"/></svg>
<svg class="i" style="left:57px;top:716px"><use href="#bug"/></svg><span class="t l" style="left:78px;top:717px">Debug</span>
<svg class="i" style="left:57px;top:736px"><use href="#bgr"/></svg><span class="t g" style="left:78px;top:736px;letter-spacing:-.08px">Terminate, Build and Debug</span>

<div class="sec" style="top:765px;height:19px"></div><div class="tri" style="top:772px"></div><span class="t st" style="left:29px;top:766px;letter-spacing:-.35px">Miscellaneous</span>
<svg class="i" style="left:15px;top:789px"><use href="#wr"/></svg><span class="t l" style="left:36px;top:789px;letter-spacing:-.02px">Edit project settings</span>
<svg class="i" style="left:15px;top:808px"><use href="#xg"/></svg><span class="t l" style="left:36px;top:808px">MCUXpresso Config Tools&gt;&gt;</span>
<svg class="i" style="left:15px;top:827px"><use href="#qs"/></svg><span class="t l" style="left:36px;top:827px;letter-spacing:-.06px">Quick Settings&gt;&gt;</span>
<svg class="i" style="left:15px;top:846px"><use href="#exp"/></svg><span class="t g" style="left:36px;top:846px;letter-spacing:-.06px">Export project(s) to archive (zip)</span>
<svg class="i" style="left:15px;top:865px"><use href="#exp"/></svg><span class="t g" style="left:36px;top:865px">Export project(s) and references to archive (zip)</span>
<svg class="i" style="left:15px;top:884px"><use href="#bin"/></svg><span class="t l" style="left:36px;top:884px;letter-spacing:0">Build all projects</span>

<!-- editor -->
<div style="left:436px;top:71px;width:1013px;height:26px;background:#e6e6e6;border-top:1px solid #dcdcdc;border-bottom:1px solid #d8d8d8;box-sizing:border-box"></div>
<div style="left:850px;top:71px;width:143px;height:26px;background:#f7f7f7"></div>
<div style="left:993px;top:72px;width:1px;height:24px;background:#d2d2d2"></div>
<svg class="i" style="left:440px;top:77px"><use href="#cf"/></svg><span class="t" style="left:460px;top:77px">freertos_blinky.c</span>
<svg class="i" style="left:575px;top:77px"><use href="#h"/></svg><span class="t" style="left:595px;top:77px;letter-spacing:-.45px">task.h</span>
<svg class="i" style="left:655px;top:77px"><use href="#h"/></svg><span class="t" style="left:675px;top:77px;letter-spacing:.15px">portmacro.h</span>
<svg class="i" style="left:770px;top:77px"><use href="#cf"/></svg><span class="t" style="left:790px;top:77px;letter-spacing:-.4px">tasks.c</span>
<svg class="i" style="left:853px;top:77px"><use href="#h"/></svg><span class="t" style="left:874px;top:77px;letter-spacing:-.5px">FreeRTOSConfig.h</span><svg class="i" style="left:974px;top:79px;width:12px;height:12px"><use href="#cl"/></svg>
<svg class="i" style="left:997px;top:77px"><use href="#cf"/></svg><span class="t" style="left:1017px;top:77px;letter-spacing:-.34px">cr_startup_lpc175x_6x.c</span>

<div style="left:436px;top:97px;width:1013px;height:708px;background:#fff"></div>
<div style="left:436px;top:97px;width:13px;height:708px;background:#f7f7f7"></div>
<div style="left:474px;top:322px;width:975px;height:15px;background:#e8f2fe"></div>
<div style="left:474px;top:427px;width:975px;height:45px;background:#e0e0e0"></div>
<div style="left:537px;top:322px;width:140px;height:15px;background:#0a6cc4"></div>
<div style="left:437px;top:99px;width:11px;height:12px;background:#f2b840;border:1px solid #c9892a;box-sizing:border-box;font:bold 10px/10px 'Liberation Sans',sans-serif;color:#234e9a;text-align:center">?</div>
<div style="left:437px;top:324px;width:11px;height:11px;background:repeating-conic-gradient(#2f9fd0 0 25%,#8ad0ee 0 50%) 0 0/2px 2px"></div>
<svg class="b" style="left:468px;top:144px;width:10px;height:10px"><circle cx="5" cy="5" r="4" fill="#e8ecf2" stroke="#8a95a5"/><path d="M3 5h4" stroke="#556"/></svg>
<svg class="b" style="left:468px;top:729px;width:10px;height:10px"><circle cx="5" cy="5" r="4" fill="#e8ecf2" stroke="#8a95a5"/><path d="M3 5h4" stroke="#556"/></svg>

<pre style="left:449px;top:97.500px;width:20px;text-align:right;color:#787878">59
60
61
62
63
64
65
66
67
68
69
70
71
72
73
74
75
76
77
78
79
80
81
82
83
84
85
86
87
88
89
90
91
92
93
94
95
96
97
98
99
100
101
102
103
104
105</pre>
<pre style="left:481px;top:97.500px;color:#1a1a1a"><b style="text-decoration:underline wavy #e0a000 1px;text-underline-offset:2px">#include</b><span style="text-decoration:underline wavy #e0a000 1px;text-underline-offset:2px"> <span style="color:#2a00ff">"board.h"</span></span>
<b>#endif</b>

<span class="c">/*-----------------------------------------------------------
 * Application specific definitions.
 *
 * These definitions should be adjusted for your particular hardware and
 * application requirements.
 *
 * THESE PARAMETERS ARE DESCRIBED WITHIN THE 'CONFIGURATION' SECTION OF THE
 * FreeRTOS API DOCUMENTATION AVAILABLE ON THE FreeRTOS.org WEB SITE.
 *----------------------------------------------------------*/</span>

<b>#define</b> configUSE_PREEMPTION        1
<b>#define</b> configUSE_IDLE_HOOK         1
<b>#define</b> <span style="color:#fff">configMAX_PRIORITIES</span>        ( ( <b>unsigned</b> portBASE_TYPE ) 8 )
<b>#define</b> configUSE_TICK_HOOK         0
<b>#define</b> configCPU_CLOCK_HZ          ( ( <b>unsigned</b> <b>long</b> ) SystemCoreClock )
<b>#define</b> configTICK_RATE_HZ          ( ( portTickType ) 1000 )
<b>#define</b> configMINIMAL_STACK_SIZE    ( ( <b>unsigned</b> <b>short</b> ) 128 )
<b>#ifdef</b> __CODE_RED
<b>#define</b> configTOTAL_HEAP_SIZE       ( ( size_t ) ( 16*1024 ) )
<b>#else</b>
<b>#define</b> configTOTAL_HEAP_SIZE       ( ( size_t ) ( 0 ) )
<b>#endif</b>
<b>#define</b> configMAX_TASK_NAME_LEN     ( 20 )
<b>#define</b> configUSE_TRACE_FACILITY    1
<b>#define</b> configUSE_16_BIT_TICKS      0
<b>#define</b> configIDLE_SHOULD_YIELD     1
<b>#define</b> configUSE_CO_ROUTINES       0
<b>#define</b> configUSE_MUTEXES           1
<b>#define</b> configUSE_TICKLESS_IDLE     1

<b>#define</b> configMAX_CO_ROUTINE_PRIORITIES ( 2 )

<b>#define</b> configUSE_COUNTING_SEMAPHORES   1
<b>#define</b> configUSE_ALTERNATIVE_API       0
<b>#define</b> configCHECK_FOR_STACK_OVERFLOW  0
<b>#define</b> configUSE_RECURSIVE_MUTEXES     1
<b>#define</b> configQUEUE_REGISTRY_SIZE       10
<b>#define</b> configGENERATE_RUN_TIME_STATS   0

<span class="c">/* Set the following definitions to 1 to include the API function, or zero
to exclude the API function. */</span>

<b>#define</b> INCLUDE_vTaskPrioritySet            1
<b>#define</b> INCLUDE_uxTaskPriorityGet           1</pre>

<!-- annotation -->
<svg class="b" style="left:0;top:0;width:1449px;height:1056px" viewBox="0 0 1449 1056" fill="none"><path d="M990 345C965 345 945 345 935 344C927 343 925 338 915 337C860 336 780 339 736 339C710 339 690 336 675 337C655 338 640 342 621 348C605 354 595 358 583 360C568 363 555 364 541 362C525 358 515 353 503 348C495 342 487 336 484 330C482 325 482 321 484 317C490 310 498 307 507 305C540 301 570 299 602 298C635 296 665 295 698 295C750 294 800 295 843 297C860 299 875 305 889 310C915 317 940 322 966 327C980 329 995 329 1004 333C1004 338 998 340 993 342" stroke="#3a3fc6" stroke-width="5.500" stroke-linecap="round" stroke-linejoin="round"/></svg>

<!-- editor scrollbar -->
<div style="left:436px;top:805px;width:1013px;height:17px;background:#f0f0f0"></div>
<div style="left:436px;top:805px;width:43px;height:17px;background:#f6f6f6"></div>
<svg class="b" style="left:482px;top:808px;width:10px;height:12px" fill="none" stroke="#aaa" stroke-width="1.500"><path d="M7 2L3 6l4 4"/></svg>
<div style="left:436px;top:822px;width:1013px;height:1px;background:#dcdcdc"></div>

<!-- console -->
<div style="left:436px;top:828px;width:1013px;height:25px;background:#e9e9e9;border-top:1px solid #dcdcdc;border-bottom:1px solid #d8d8d8;box-sizing:border-box"></div>
<div style="left:702px;top:828px;width:94px;height:25px;background:#f5f5f5"></div>
<svg class="i" style="left:440px;top:833px"><use href="#sdk"/></svg><span class="t" style="left:460px;top:833px;letter-spacing:-.4px">Installed SDKs</span>
<svg class="i" style="left:543px;top:833px"><use href="#prp"/></svg><span class="t" style="left:563px;top:833px;letter-spacing:-.22px">Properties</span>
<svg class="i" style="left:625px;top:833px"><use href="#prb"/></svg><span class="t" style="left:646px;top:833px">Problems</span>
<svg class="i" style="left:706px;top:833px"><use href="#mon"/></svg><span class="t" style="left:725px;top:833px">Console</span><svg class="i" style="left:776px;top:835px;width:12px;height:12px"><use href="#cl"/></svg>
<svg class="i" style="left:799px;top:833px"><use href="#trm"/></svg><span class="t" style="left:819px;top:833px">Terminal</span>
<svg class="i" style="left:873px;top:833px"><use href="#bin"/></svg><span class="t" style="left:893px;top:833px;letter-spacing:-.02px">Image Info</span>
<svg class="i" style="left:961px;top:833px"><use href="#dbg"/></svg><span class="t" style="left:980px;top:833px">Debugger Console</span>
<svg class="i" style="left:1088px;top:833px"><use href="#per"/></svg><span class="t" style="left:1107px;top:833px;letter-spacing:-.02px">Offline Peripherals</span>
<span class="t" style="left:436px;top:853px">No consoles to display at this time.</span>
<div style="left:436px;top:868px;width:1013px;height:1px;background:#a8a8a8"></div>
<div style="left:435px;top:1013px;width:1014px;height:1px;background:#dcdcdc"></div>
<div style="left:3px;top:1013px;width:428px;height:1px;background:#dcdcdc"></div>
<div style="left:431px;top:71px;width:1px;height:943px;background:#dcdcdc"></div>
<div style="left:435px;top:71px;width:1px;height:943px;background:#dcdcdc"></div>

<!-- status -->
<svg class="i" style="left:6px;top:1018px"><use href="#h"/></svg>
<span class="t" style="left:26px;top:1018px;letter-spacing:-.05px">/freertos_blinky/example/inc/FreeRTOSConfig.h</span>
<div style="left:1359px;top:1020px;width:2px;height:14px;background:repeating-linear-gradient(#c0c0c0 0 2px,transparent 2px 4px)"></div>

<!-- taskbar -->
<div style="left:0;top:1040px;width:1449px;height:16px;background:#3c3d28"></div>
<div style="left:346px;top:1040px;width:48px;height:16px;background:#6a6b5a"></div>
<div style="left:18px;top:1052px;width:7px;height:4px;background:#fff"></div><div style="left:26px;top:1051px;width:8px;height:5px;background:#fff"></div>
<div style="left:66px;top:1052px;width:14px;height:4px;border:1px solid #fff;border-bottom:0;box-sizing:border-box"></div>
<div style="left:114px;top:1051px;width:22px;height:5px;background:#f0c040"></div>
<svg class="b" style="left:160px;top:1048px;width:28px;height:8px"><path d="M4 8L12 2l4 3 4-5 6 8z" fill="#f0a030"/></svg>
<div style="left:212px;top:1050px;width:22px;height:6px;background:#5558b8;border-radius:2px"></div>
<div style="left:260px;top:1050px;width:22px;height:6px;background:#1a78d0"></div>
<svg class="b" style="left:310px;top:1048px;width:20px;height:8px"><path d="M2 8L10 0l8 8z" fill="#e8a040"/></svg>
<div style="left:358px;top:1049px;width:24px;height:7px;background:#8f92d0;border:2px solid #2a3f8f;border-bottom:0;box-sizing:border-box"></div>
</div></body></html>
